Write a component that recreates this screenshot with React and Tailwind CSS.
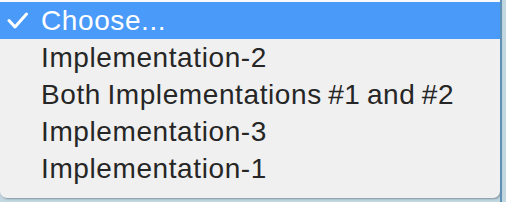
import React from "react";

const items = [
  "Implementation-2",
  "Both Implementations #1 and #2",
  "Implementation-3",
  "Implementation-1",
];

export default function App() {
  return (
    <div
      className="w-[506px] h-[202px] bg-[#c3d7e1] flex overflow-hidden"
      style={{ fontFamily: '"Liberation Sans", Arial, sans-serif' }}
    >
      <div className="w-[500px] h-[198px] bg-[#f0f0f0] rounded-b-[7px] shadow-[1px_1px_2px_rgba(60,80,100,0.5)] flex flex-col text-[28px] leading-none tracking-[0.6px] [word-spacing:-2px]">
        <div className="h-[2px] bg-[#fafafa]"></div>
        <div className="h-[37px] bg-[#4a9af9] text-white flex items-center">
          <span className="w-[41px] pl-[7px] flex">
            <svg width="22" height="18" viewBox="0 0 22 18" fill="none">
              <path
                d="M2 8.5 L8 15 L19.5 2"
                stroke="white"
                strokeWidth="3"
                strokeLinecap="round"
                strokeLinejoin="round"
              />
            </svg>
          </span>
          <span>Choose...</span>
        </div>
        {items.map((t) => (
          <div
            key={t}
            className="h-[37px] flex items-center pl-[41px] text-[#262626]"
          >
            {t}
          </div>
        ))}
      </div>
      <div className="w-[2px] h-full bg-[#5e8fb5]"></div>
    </div>
  );
}
